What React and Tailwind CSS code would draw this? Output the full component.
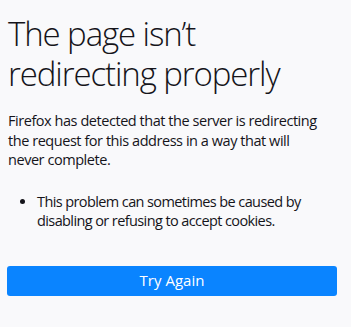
export default function App() {
  return (
    <div className="min-h-screen bg-[#f9f9fb] text-[#15141a] px-2 pt-[14px]" style={{ fontFamily: '"Open Sans", sans-serif' }}>
      <h1 className="text-[33px] leading-[40px] font-light tracking-[-1.1px]">
        The page isn’t redirecting properly
      </h1>
      <p className="mt-[17px] w-[330px] text-[14.5px] leading-[19.5px] tracking-[-0.45px]">
        Firefox has detected that the server is redirecting the request for this address in a way that will never&nbsp;complete.
      </p>
      <ul className="mt-[22px] pl-[29px] text-[14.5px] leading-[19.5px] tracking-[-0.6px] list-disc">
        <li>This problem can sometimes be caused by disabling or refusing to accept cookies.</li>
      </ul>
      <button className="mt-[35px] w-[330px] h-[30px] rounded-[3px] bg-[#0a84ff] text-white text-[15px] -ml-px">
        Try Again
      </button>
    </div>
  );
}
